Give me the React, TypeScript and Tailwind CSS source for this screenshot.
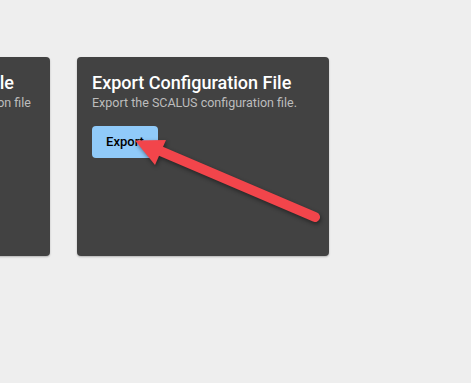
import { ReactNode } from 'react';

function Card({ title, desc, children }: { title: string; desc: string; children?: ReactNode }) {
  return (
    <div className="w-[252px] h-[199px] shrink-0 rounded-[4px] bg-[#424242] px-[15px] pt-[14px] shadow-[0_1px_2px_rgba(0,0,0,0.25)]">
      <h3 className="text-[18px] leading-[24px] font-medium text-white whitespace-nowrap">{title}</h3>
      <p className="text-[12.5px] leading-[16px] text-[#bdbdbd] whitespace-nowrap">{desc}</p>
      {children}
    </div>
  );
}

export default function App() {
  return (
    <div className="relative w-[471px] h-[383px] overflow-hidden bg-[#eeeeee]" style={{ fontFamily: 'Roboto, "Liberation Sans", sans-serif' }}>
      <div className="flex gap-[27px] pt-[57px] ml-[-202px]">
        <Card title="Import Configuration File" desc="Import a new SCALUS configuration file">
          <button className="mt-[15px] h-[32px] w-[66px] rounded-[4px] bg-[#90caf9] text-[13px] font-medium text-black">
            Import
          </button>
        </Card>
        <Card title="Export Configuration File" desc="Export the SCALUS configuration file.">
          <button className="mt-[15px] h-[32px] w-[66px] rounded-[4px] bg-[#90caf9] text-[13px] font-medium text-black">
            Export
          </button>
        </Card>
      </div>

      {/* annotation arrow */}
      <svg className="absolute left-0 top-0 pointer-events-none" width="471" height="383" style={{ filter: 'drop-shadow(1px 2px 2px rgba(0,0,0,0.45))' }}>
        <line x1="158" y1="150" x2="315" y2="217" stroke="#f2454b" strokeWidth="10" strokeLinecap="round" />
        <polygon points="135,140.5 166,140 155,165" fill="#f2454b" />
      </svg>
    </div>
  );
}
